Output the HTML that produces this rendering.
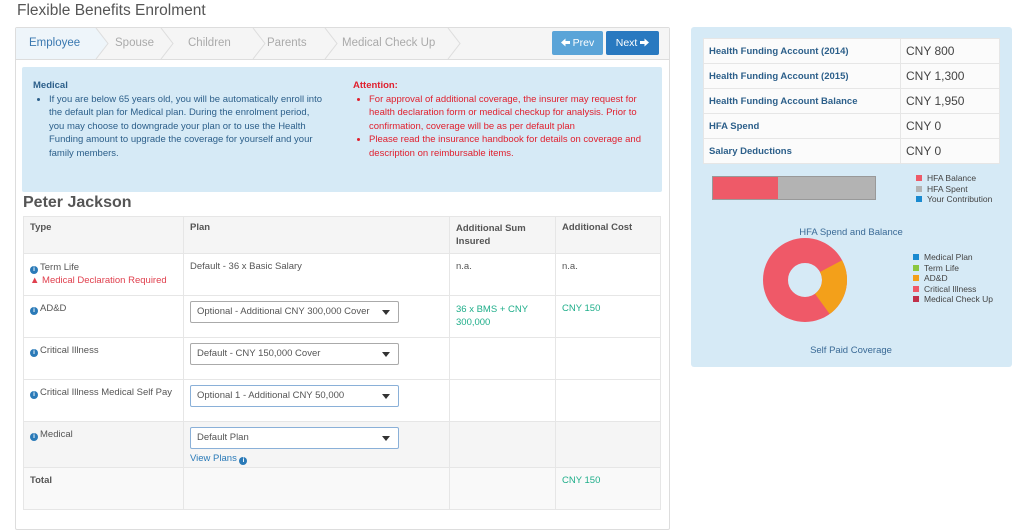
<!DOCTYPE html>
<html><head><meta charset="utf-8"><style>
*{box-sizing:border-box;margin:0;padding:0}
body{width:1024px;height:531px;background:#fff;font-family:"Liberation Sans",sans-serif;font-size:10px;color:#555;position:relative;overflow:hidden}
.abs{position:absolute}
h1{position:absolute;left:17px;top:2px;font-size:15.5px;font-weight:normal;color:#555}
.panel{left:15px;top:27px;width:655px;height:503px;border:1px solid #ddd;border-radius:2px}
.tabs{left:16px;top:28px;width:653px;height:32px;background:#f5f5f5;border-bottom:1px solid #ddd}
.tab{position:absolute;top:0;height:31px;line-height:31px;font-size:11.5px;color:#aaa}
.btn{position:absolute;top:31px;height:24px;line-height:24px;color:#fff;font-size:10.5px;text-align:center;border-radius:2px}
.info{left:22px;top:67px;width:640px;height:125px;background:#d6eaf6;border-radius:2px}
.info li{margin-left:16px}
table{border-collapse:collapse;table-layout:fixed}
.t td{border:1px solid #e6e6e6;vertical-align:top;padding:7px 6px 0;font-size:9.5px}
.sel{width:209px;height:22px;border:1px solid #aaa;border-radius:2px;background:#fff;padding:0 6px;line-height:20px;font-size:9.5px;position:relative;color:#555}
.sel.f{border-color:#8ab0d8}
.sel:after{content:"";position:absolute;right:8px;top:8px;border:4px solid transparent;border-top:5px solid #333}
.i{display:inline-block;width:8px;height:8px;border-radius:50%;background:#2a7ab8;color:#fff;font-size:6.5px;line-height:8px;text-align:center;font-weight:bold;vertical-align:-1px;margin-right:2px}
.g{color:#1fae8a}
.rp{left:691px;top:27px;width:321px;height:340px;background:#d6eaf6;border-radius:3px}
.r td{background:#fbfbfb;border:1px solid #e6e6e6;height:25px;padding:0 5px;font-size:9.5px;font-weight:bold;color:#2c5f8a}
.r td.v{font-size:12px;font-weight:normal;color:#444}
.lg{font-size:8.5px;color:#444;line-height:10.5px}
.lg span{display:inline-block;width:6px;height:6px;margin-right:5px}
</style></head><body>
<h1>Flexible Benefits Enrolment</h1>
<div class="abs panel"></div>
<div class="abs tabs">
<svg class="abs" style="left:0;top:0" width="460" height="31">
<polygon points="0,0 80,0 92,15.5 80,31 0,31" fill="#eef5fa"/>
<g fill="none" stroke="#ddd"><polyline points="80,0 92,15.5 80,31"/><polyline points="145,0 157,15.5 145,31"/><polyline points="237,0 249,15.5 237,31"/><polyline points="309,0 321,15.5 309,31"/><polyline points="432,0 444,15.5 432,31"/></g>
</svg>
<div class="tab" style="left:13px;color:#3a78b0">Employee</div>
<div class="tab" style="left:99px">Spouse</div>
<div class="tab" style="left:172px">Children</div>
<div class="tab" style="left:251px">Parents</div>
<div class="tab" style="left:326px">Medical Check Up</div>
</div>
<div class="btn" style="left:552px;width:51px;background:#5aa4d8"><svg width="9" height="9" viewBox="0 0 10 10" style="vertical-align:-1px"><path d="M0 5 L5 0.5 V3.3 H10 V6.7 H5 V9.5 Z" fill="#fff"/></svg> Prev</div>
<div class="btn" style="left:606px;width:53px;background:#2979c0">Next <svg width="9" height="9" viewBox="0 0 10 10" style="vertical-align:-1px"><path d="M10 5 L5 0.5 V3.3 H0 V6.7 H5 V9.5 Z" fill="#fff"/></svg></div>
<div class="abs info">
<div class="abs" style="left:11px;top:12px;width:290px;line-height:13.5px;font-size:9.5px;color:#2c5f8a"><b>Medical</b><ul><li>If you are below 65 years old, you will be automatically enroll into the default plan for Medical plan. During the enrolment period, you may choose to downgrade your plan or to use the Health Funding amount to upgrade the coverage for yourself and your family members.</li></ul></div>
<div class="abs" style="left:331px;top:12px;width:290px;line-height:13.5px;font-size:9.5px;color:#e0202e"><b>Attention:</b><ul><li>For approval of additional coverage, the insurer may request for health declaration form or medical checkup for analysis. Prior to confirmation, coverage will be as per default plan</li><li>Please read the insurance handbook for details on coverage and description on reimbursable items.</li></ul></div>
</div>
<div class="abs" style="left:23px;top:194px;font-size:16px;font-weight:bold;color:#555">Peter Jackson</div>
<table class="abs t" style="left:23px;top:216px;width:638px">
<colgroup><col style="width:160px"><col style="width:266px"><col style="width:106px"><col></colgroup>
<tr style="background:#f5f5f5;height:37px"><td style="font-weight:bold;padding-top:5px">Type</td><td style="font-weight:bold;padding-top:5px">Plan</td><td style="font-weight:bold;line-height:13px;padding-top:5px">Additional Sum Insured</td><td style="font-weight:bold;padding-top:5px">Additional Cost</td></tr>
<tr style="height:42px"><td style="line-height:13px"><span class="i">i</span>Term Life<br><span style="color:#e0404e">▲ Medical Declaration Required</span></td><td>Default - 36 x Basic Salary</td><td>n.a.</td><td>n.a.</td></tr>
<tr style="height:42px"><td><span class="i">i</span>AD&amp;D</td><td style="padding-top:5px"><div class="sel">Optional - Additional CNY 300,000 Cover</div></td><td class="g" style="line-height:13px">36 x BMS + CNY 300,000</td><td class="g">CNY 150</td></tr>
<tr style="height:42px"><td><span class="i">i</span>Critical Illness</td><td style="padding-top:5px"><div class="sel">Default - CNY 150,000 Cover</div></td><td></td><td></td></tr>
<tr style="height:42px"><td><span class="i">i</span>Critical Illness Medical Self Pay</td><td style="padding-top:5px"><div class="sel f">Optional 1 - Additional CNY 50,000</div></td><td></td><td></td></tr>
<tr style="height:46px;background:#f5f5f5"><td><span class="i">i</span>Medical</td><td style="padding-top:5px"><div class="sel f">Default Plan</div><div style="color:#2a7ab8;margin-top:4px">View Plans <span class="i">i</span></div></td><td></td><td></td></tr>
<tr style="height:42px;background:#f9f9f9"><td style="font-weight:bold">Total</td><td></td><td></td><td class="g">CNY 150</td></tr>
</table>
<div class="abs rp"></div>
<table class="abs r" style="left:703px;top:38px;width:297px">
<tr><td>Health Funding Account (2014)</td><td class="v" style="width:99px">CNY 800</td></tr>
<tr><td>Health Funding Account (2015)</td><td class="v">CNY 1,300</td></tr>
<tr><td>Health Funding Account Balance</td><td class="v g">CNY 1,950</td></tr>
<tr><td>HFA Spend</td><td class="v">CNY 0</td></tr>
<tr><td>Salary Deductions</td><td class="v g">CNY 0</td></tr>
</table>
<div class="abs" style="left:712px;top:176px;width:164px;height:24px;background:#b3b3b3;border:1px solid #999"><div style="width:65px;height:22px;background:#ee5a68"></div></div>
<div class="abs lg" style="left:916px;top:173px"><span style="background:#ee5a68"></span>HFA Balance<br><span style="background:#b3b3b3"></span>HFA Spent<br><span style="background:#1a8ad0"></span>Your Contribution</div>
<div class="abs" style="left:751px;top:227px;width:200px;text-align:center;font-size:9.5px;color:#3a6a96">HFA Spend and Balance</div>
<svg class="abs" style="left:760px;top:235px" width="90" height="90">
<circle cx="45" cy="45" r="29.5" fill="none" stroke="#ef5968" stroke-width="25"/>
<path d="M82.1 25.3 A42 42 0 0 1 69.7 79 L55 58.8 A17 17 0 0 0 60 37 Z" fill="#f3a01a"/>
</svg>
<div class="abs lg" style="left:913px;top:252px"><span style="background:#1a8ad0"></span>Medical Plan<br><span style="background:#8cc63f"></span>Term Life<br><span style="background:#f3a01a"></span>AD&amp;D<br><span style="background:#ef5968"></span>Critical Illness<br><span style="background:#c0304a"></span>Medical Check Up</div>
<div class="abs" style="left:751px;top:345px;width:200px;text-align:center;font-size:9.5px;color:#3a6a96">Self Paid Coverage</div>
</body></html>
